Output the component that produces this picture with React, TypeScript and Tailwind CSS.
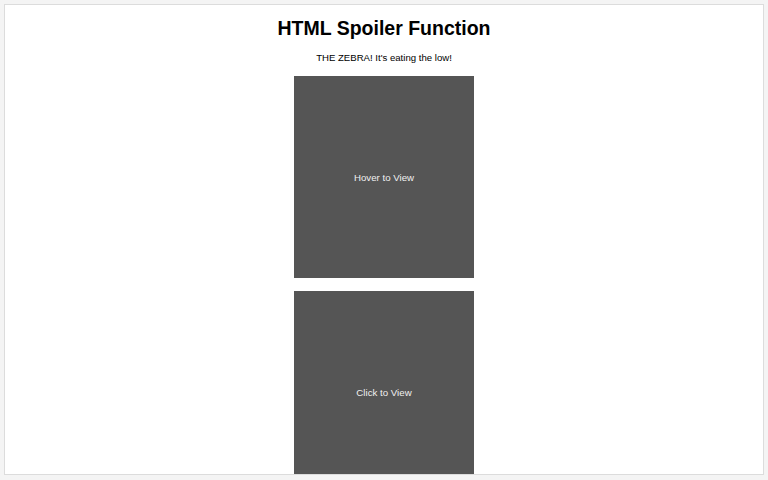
import React from "react";

function Spoiler({ label }: { label: string }) {
  return (
    <div className="mx-auto flex h-[202px] w-[180px] shrink-0 items-center justify-center bg-[#555555] pt-[1px]">
      <span className="text-[9.7px] leading-[14px] text-[#f0f0f0]">{label}</span>
    </div>
  );
}

export default function App() {
  return (
    <div
      className="h-[480px] w-full bg-[#f4f4f4] p-1"
      style={{ fontFamily: '"Liberation Sans", Arial, sans-serif' }}
    >
      <div className="flex h-[471px] flex-col overflow-hidden border border-[#dcdcdc] bg-white pt-[11px]">
        <h1 className="text-center text-[19.5px] font-bold leading-[24px] text-black">
          HTML Spoiler Function
        </h1>
        <p className="mt-[11px] text-center text-[9.6px] leading-[14px] text-black">
          THE ZEBRA! It's eating the low!
        </p>
        <div className="mt-[11px] flex flex-col gap-[13px]">
          <Spoiler label="Hover to View" />
          <Spoiler label="Click to View" />
        </div>
      </div>
    </div>
  );
}
